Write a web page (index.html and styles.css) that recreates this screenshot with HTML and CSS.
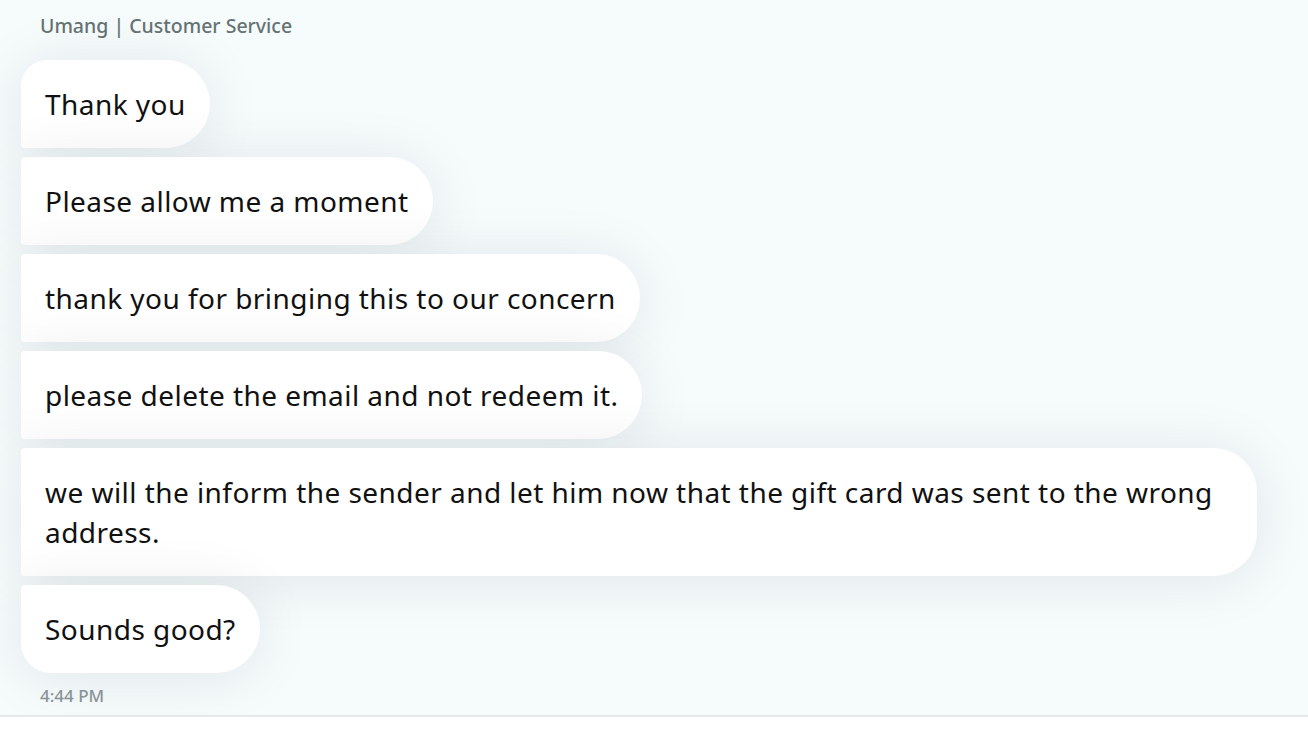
FILE: index.html
```html
<!DOCTYPE html>
<html lang="en">
<head>
<meta charset="utf-8">
<title>Chat</title>
<link rel="stylesheet" href="styles.css">
</head>
<body>
<div class="chat">
  <div class="sender">Umang | Customer Service</div>
  <div class="group">
    <div class="bubble first">Thank you</div>
    <div class="bubble">Please allow me a moment</div>
    <div class="bubble">thank you for bringing this to our concern</div>
    <div class="bubble">please delete the email and not redeem it.</div>
    <div class="bubble">we will the inform the sender and let him now that the gift card was sent to the wrong address.</div>
    <div class="bubble last">Sounds good?</div>
  </div>
  <div class="time">4:44 PM</div>
</div>
</body>
</html>
```
FILE: styles.css
```css
html, body {
  margin: 0;
  padding: 0;
  background: #ffffff;
}
body {
  width: 1308px;
  height: 730px;
  overflow: hidden;
  font-family: "Noto Sans", "Open Sans", sans-serif;
}
.chat {
  height: 717px;
  box-sizing: border-box;
  border-bottom: 2px solid #e6e9ea;
  background: #f6fbfc;
  padding: 13px 0 0 21px;
  display: flex;
  flex-direction: column;
  align-items: flex-start;
  overflow: hidden;
}
.sender {
  font-size: 19.5px;
  line-height: 26px;
  font-weight: 500;
  color: #667374;
  padding-left: 19px;
  margin-bottom: 21px;
}
.group {
  display: flex;
  flex-direction: column;
  align-items: flex-start;
  gap: 9px;
  max-width: 1236px;
}
.bubble {
  background: #ffffff;
  color: #111111;
  font-size: 28px;
  line-height: 40px;
  letter-spacing: 0.45px;
  padding: 24px 24px;
  border-radius: 4px 44px 44px 4px;
  box-shadow: 0 4px 60px rgba(15, 30, 40, 0.09);
}
.bubble.first {
  border-top-left-radius: 26px;
}
.bubble.last {
  border-bottom-left-radius: 30px;
}
.time {
  font-size: 17px;
  line-height: 22px;
  font-weight: 500;
  color: #889496;
  padding-left: 19px;
  margin-top: 12px;
}
```
